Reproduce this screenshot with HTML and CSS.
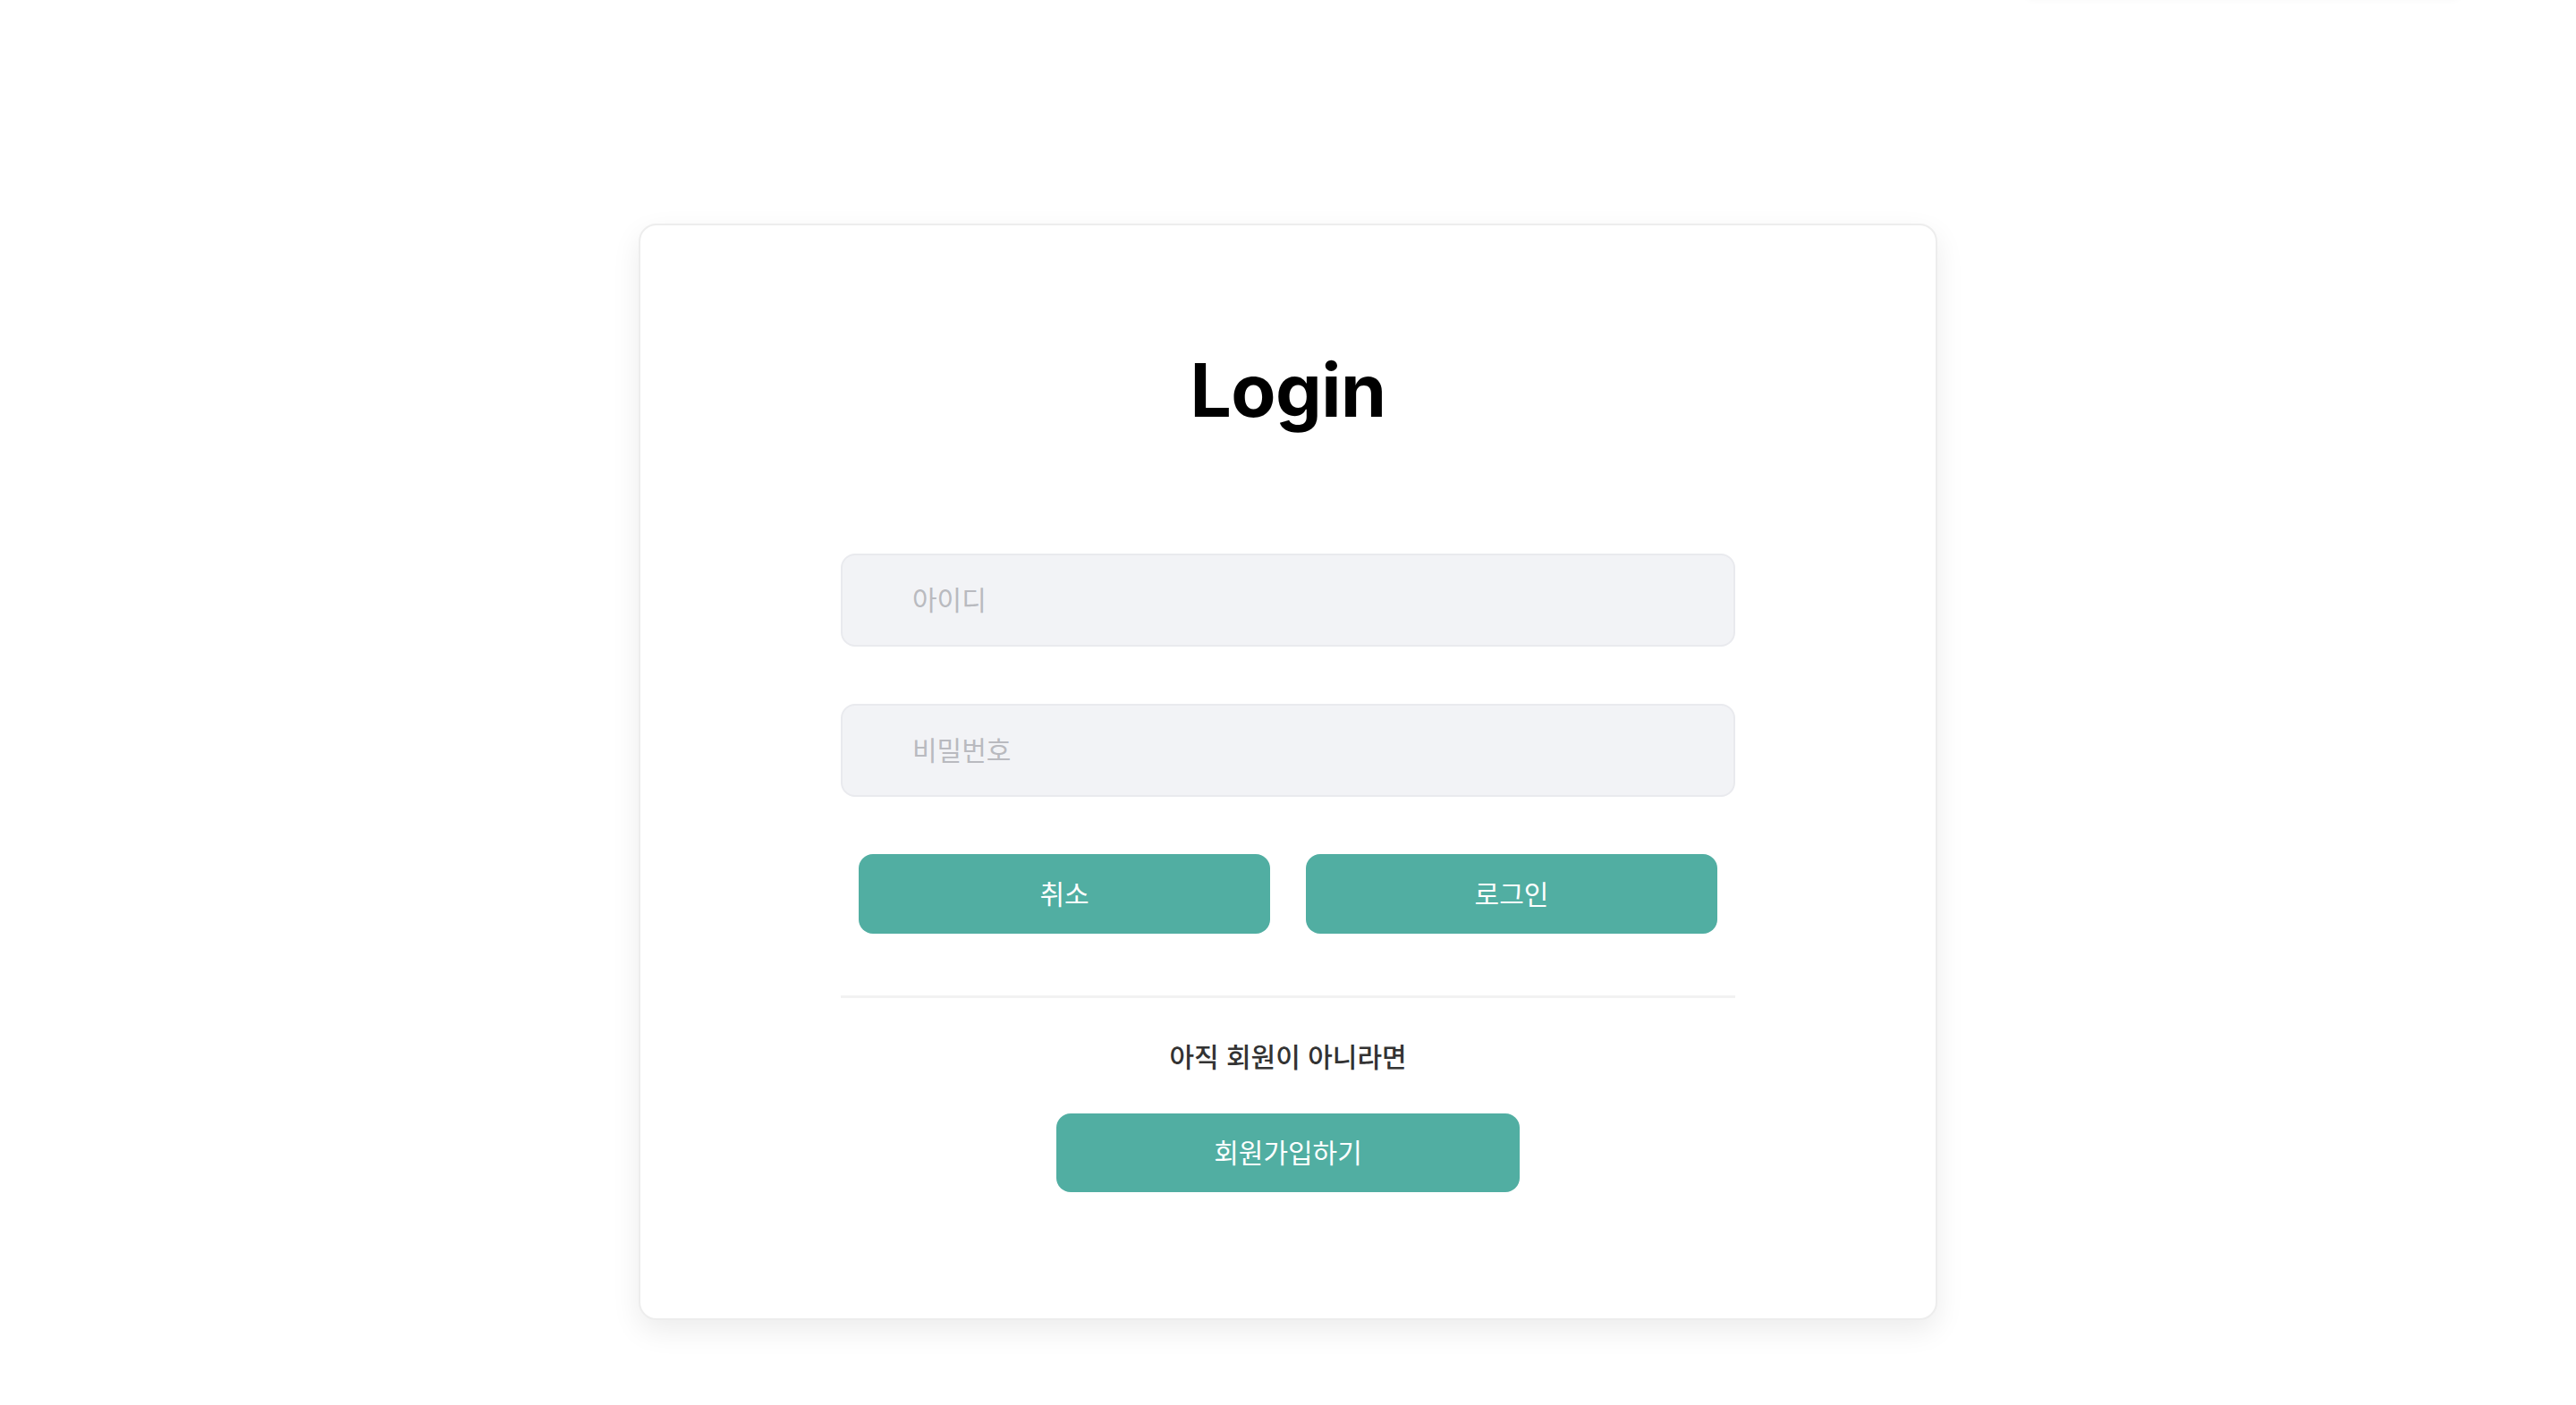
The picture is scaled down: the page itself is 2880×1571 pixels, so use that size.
FILE: index.html
```html
<!DOCTYPE html>
<html lang="ko">
<head>
<meta charset="utf-8">
<title>Login</title>
<link rel="stylesheet" href="styles.css">
</head>
<body>
<div class="toast-ghost"></div>
<main class="page">
  <section class="card">
    <h1 class="title">Login</h1>
    <form class="form">
      <input class="field" type="text" placeholder="아이디">
      <input class="field" type="password" placeholder="비밀번호">
      <div class="actions">
        <button type="button" class="btn">취소</button>
        <button type="button" class="btn">로그인</button>
      </div>
    </form>
    <hr class="divider">
    <p class="hint">아직 회원이 아니라면</p>
    <button type="button" class="btn btn-signup">회원가입하기</button>
  </section>
</main>
</body>
</html>
```

FILE: styles.css
```css
html, body {
  margin: 0;
  padding: 0;
  background: #ffffff;
}
body {
  font-family: "Noto Sans CJK KR", "Noto Sans", sans-serif;
  width: 2880px;
  height: 1571px;
  overflow: hidden;
  position: relative;
}
.toast-ghost {
  position: absolute;
  top: -56px;
  left: 2265px;
  width: 485px;
  height: 50px;
  background: #fff;
  box-shadow: 0 4px 10px rgba(0, 0, 0, 0.05);
  border-radius: 8px;
}
.page {
  display: flex;
  justify-content: center;
  padding-top: 250px;
}
.card {
  box-sizing: border-box;
  width: 1452px;
  background: #ffffff;
  border: 2px solid #ededed;
  border-radius: 20px;
  box-shadow: 0 12px 32px rgba(0, 0, 0, 0.08);
  padding: 144px 0 141px;
  display: flex;
  flex-direction: column;
  align-items: center;
}
.title {
  margin: 0;
  font-family: "Inter", "Liberation Sans", sans-serif;
  font-weight: 700;
  font-size: 82px;
  line-height: 82px;
  color: #000;
  letter-spacing: -0.5px;
}
.form {
  margin-top: 141px;
  width: 1000px;
  display: flex;
  flex-direction: column;
  gap: 64px;
}
.field {
  box-sizing: border-box;
  height: 104px;
  width: 100%;
  border: 2px solid #e9eaee;
  border-radius: 16px;
  background: #f2f3f6;
  padding: 0 78px 4px;
  font-family: "Noto Sans CJK KR", sans-serif;
  font-size: 30px;
  color: #333;
  outline: none;
}
.field::placeholder {
  color: #b9babf;
}
.actions {
  display: flex;
  gap: 40px;
  padding: 0 20px;
}
.btn {
  flex: 1;
  height: 89px;
  border: none;
  border-radius: 16px;
  background: #51aea2;
  color: #ffffff;
  font-family: "Noto Sans CJK KR", sans-serif;
  font-size: 30px;
  font-weight: 400;
  padding: 0 0 4px;
  cursor: pointer;
}
.divider {
  width: 1000px;
  margin: 69px 0 0;
  border: none;
  height: 3px;
  background: #f2f2f2;
}
.hint {
  margin: 42px 0 0;
  font-size: 30px;
  line-height: 45px;
  font-weight: 500;
  color: #333333;
}
.btn-signup {
  flex: none;
  width: 518px;
  height: 88px;
  margin-top: 42px;
}
```
